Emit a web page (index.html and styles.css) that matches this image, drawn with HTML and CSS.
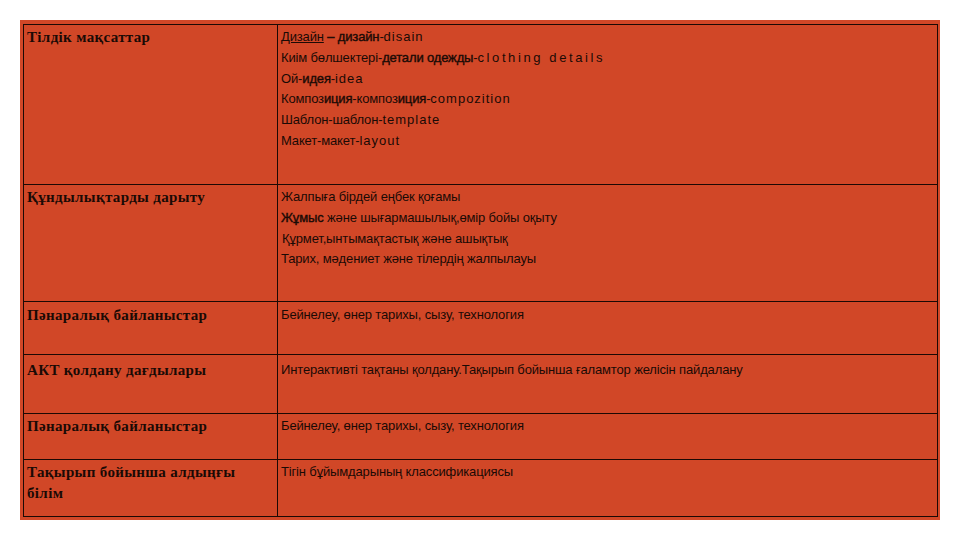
FILE: index.html
```html
<!DOCTYPE html>
<html lang="kk">
<head>
<meta charset="utf-8">
<title>Table</title>
<link rel="stylesheet" href="styles.css">
</head>
<body>
<div class="slide">
  <div class="grid">
    <div class="cell key r1">Тілдік мақсаттар</div>
    <div class="cell val r1">
      <div><span class="u">Дизайн</span> <b>– дизайн</b>-<span class="lat">disain</span></div>
      <div>Киім бөлшектері-<b>детали одежды</b>-<span class="lat wide">clothing details</span></div>
      <div>Ой-<b>идея</b>-<span class="lat">idea</span></div>
      <div>Композ<b>иция</b>-композ<b>иция</b>-<span class="lat">compozition</span></div>
      <div>Шаблон-шаблон-<span class="lat">template</span></div>
      <div>Макет-макет-<span class="lat">layout</span></div>
    </div>
    <div class="cell key r2">Құндылықтарды дарыту</div>
    <div class="cell val r2">
      <div>Жалпыға бірдей еңбек қоғамы</div>
      <div><b>Жұмыс</b> және шығармашылық,өмір бойы оқыту</div>
      <div class="ind">Құрмет,ынтымақтастық және ашықтық</div>
      <div>Тарих, мәдениет және тілердің жалпылауы</div>
    </div>
    <div class="cell key r3">Пәнаралық байланыстар</div>
    <div class="cell val r3">Бейнелеу, өнер тарихы, сызу, технология</div>
    <div class="cell key r4">АКТ қолдану дағдылары</div>
    <div class="cell val r4">Интерактивті тақтаны қолдану.Тақырып бойынша ғаламтор желісін пайдалану</div>
    <div class="cell key r5">Пәнаралық байланыстар</div>
    <div class="cell val r5">Бейнелеу, өнер тарихы, сызу, технология</div>
    <div class="cell key r6">Тақырып бойынша алдыңғы<br>білім</div>
    <div class="cell val r6">Тігін бұйымдарының классификациясы</div>
  </div>
</div>
</body>
</html>
```

FILE: styles.css
```css
html, body {
  margin: 0;
  padding: 0;
  background: #ffffff;
}
.slide {
  margin: 20px;
  width: 914px;
  height: 496px;
  padding: 4px 3px 0 3px;
  background: #d14727;
}
.grid {
  display: grid;
  grid-template-columns: 254px 660px;
  grid-template-rows: 160px 117px 53px 59px 46px 57px;
  border-top: 1px solid #1c0904;
  border-left: 1px solid #1c0904;
  width: 914px;
}
.cell {
  border-right: 1px solid #1c0904;
  border-bottom: 1px solid #1c0904;
  padding: 2px 3px 0 3px;
  color: #1a0a05;
  line-height: 20.8px;
  overflow: hidden;
}
.key {
  font-family: "Liberation Serif", "Times New Roman", serif;
  font-weight: bold;
  font-size: 15px;
  letter-spacing: 0.35px;
}
.val {
  font-family: "Liberation Sans", Arial, sans-serif;
  font-size: 13px;
  letter-spacing: -0.15px;
}
.val b {
  font-weight: normal;
  -webkit-text-stroke: 0.4px #1a0a05;
}
.lat {
  letter-spacing: 1px;
}
.lat.wide {
  letter-spacing: 2.6px;
}
.u {
  text-decoration: underline;
}
.ind {
  padding-left: 1px;
}
.r4 {
  padding-top: 5px;
}
.r3 {
  padding-top: 3px;
}
```
